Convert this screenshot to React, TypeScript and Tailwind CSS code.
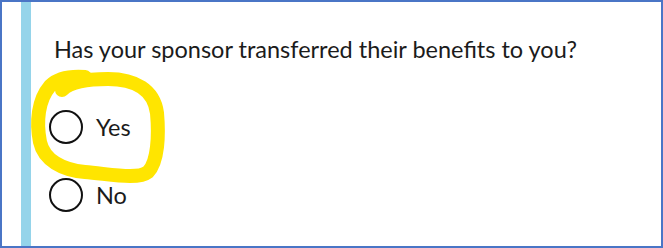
import React from "react";

function Radio({ label }: { label: string }) {
  return (
    <div className="flex items-center h-[34px]">
      <span className="block w-[34px] h-[34px] rounded-full border-[2.5px] border-[#111111] shrink-0" />
      <span className="ml-[13px] text-[23.5px] leading-[26px] text-[#1b1b1b]">{label}</span>
    </div>
  );
}

export default function App() {
  return (
    <div
      className="relative w-[663px] h-[248px] border-2 border-[#4a75c6] bg-white flex overflow-hidden"
      style={{ fontFamily: "Lato, 'Noto Sans', sans-serif" }}
    >
      <svg
        className="absolute left-[-2px] top-[-2px] pointer-events-none"
        width="663"
        height="248"
        viewBox="0 0 663 248"
      >
        <path
          d="M 62 90 C 70 82, 88 79, 108 79 C 135 79, 154 90, 157 113 C 159 135, 158 162, 148 172 C 138 180, 110 174, 85 172 C 62 170, 44 160, 40 142 C 36 122, 38 100, 50 86 C 58 78, 72 76, 85 77"
          fill="none"
          stroke="#ffe500"
          strokeWidth="14"
          strokeLinecap="round"
          strokeLinejoin="round"
        />
      </svg>
      <div className="w-[19px] shrink-0" />
      <div className="relative w-[10px] shrink-0 bg-[#95d4ea]" />
      <div className="relative flex flex-col pl-[18px] pt-[34px]">
        <p className="ml-[5px] text-[23.5px] leading-[26px] text-[#1b1b1b]">
          Has your sponsor transferred their benefits to you?
        </p>
        <div className="mt-[48px] flex flex-col gap-[34px]">
          <Radio label="Yes" />
          <Radio label="No" />
        </div>
      </div>
    </div>
  );
}
